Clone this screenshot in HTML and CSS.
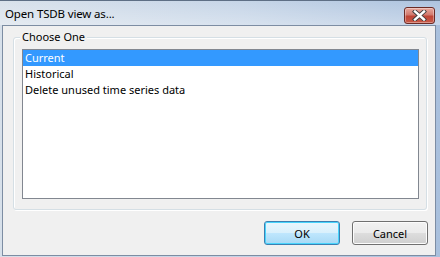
FILE: index.html
```html
<!DOCTYPE html>
<html>
<head>
<meta charset="utf-8">
<link rel="stylesheet" href="styles.css">
</head>
<body>
<div class="window">
  <div class="titlebar">
    <span class="title">Open TSDB view as...</span>
    <button class="close" aria-label="Close">
      <svg width="17" height="11" viewBox="0 0 17 11">
        <path d="M4 1.5 L13 9.5 M13 1.5 L4 9.5" stroke="#3d3d3d" stroke-width="4.2" stroke-linecap="square" fill="none"/>
        <path d="M4 1.5 L13 9.5 M13 1.5 L4 9.5" stroke="#ffffff" stroke-width="2.4" stroke-linecap="square" fill="none"/>
      </svg>
    </button>
  </div>
  <div class="client">
    <div class="group">
      <span class="group-label">Choose One</span>
      <ul class="list">
        <li class="item selected">Current</li>
        <li class="item">Historical</li>
        <li class="item">Delete unused time series data</li>
      </ul>
    </div>
    <div class="buttons">
      <button class="btn default">OK</button>
      <button class="btn">Cancel</button>
    </div>
  </div>
</div>
</body>
</html>
```
FILE: styles.css
```css
html, body {
  margin: 0;
  padding: 0;
  background: #fff;
}
body {
  font-family: "Noto Sans", "Open Sans", sans-serif;
  font-size: 11px;
  color: #000;
}
.window {
  width: 440px;
  height: 257px;
  box-sizing: border-box;
  padding: 0 4px 1px 2px;
  border-top: 1px solid #5e6f85;
  background: linear-gradient(90deg, #d7e0ea 0%, #c3d3e6 55%, #a9c0dd 100%);
  display: flex;
  flex-direction: column;
}
.titlebar {
  height: 24px;
  display: flex;
  align-items: center;
  justify-content: space-between;
  padding-left: 5px;
  background: linear-gradient(180deg, rgba(255,255,255,0.05), rgba(255,255,255,0.35));
  margin: 0 -4px 0 -2px;
  padding-right: 5px;
}
.title {
  color: #000;
  font-size: 11.5px;
  line-height: 16px;
  margin-top: 2px;
  letter-spacing: -0.15px;
}
.close {
  width: 31px;
  height: 17px;
  margin-top: 4px;
  padding: 0;
  border: 1px solid #6b2b25;
  border-radius: 3px;
  background: linear-gradient(180deg, #e8a89d 0%, #d27a6e 45%, #bf4536 55%, #c85a48 100%);
  box-shadow: inset 0 0 0 1px rgba(255,255,255,0.35);
  display: flex;
  align-items: center;
  justify-content: center;
}
.close svg { display: block; }
.client {
  flex: 1;
  background: #f0f0f0;
  border: 1px solid #7d8da3;
  display: flex;
  flex-direction: column;
}
.group {
  position: relative;
  margin: 11px 8px 0 10px;
  height: 173px;
  box-sizing: border-box;
  border: 1px solid #d5dfe5;
  border-radius: 3px;
  box-shadow: inset 1px 1px 0 #ffffff, 1px 1px 0 #ffffff;
  padding: 11px 7px 10px 8px;
}
.group-label {
  position: absolute;
  left: 6px;
  top: -9px;
  padding: 0 2px;
  background: #f0f0f0;
  line-height: 16px;
}
.list {
  list-style: none;
  margin: 0;
  padding: 0;
  height: 150px;
  box-sizing: border-box;
  border: 1px solid #828790;
  background: #fff;
}
.item {
  height: 16px;
  line-height: 16px;
  padding-left: 2px;
  white-space: nowrap;
}
.item.selected {
  background: #3399ff;
  color: #fff;
}
.buttons {
  display: flex;
  justify-content: flex-end;
  gap: 12px;
  margin: 11px 7px 0 0;
}
.btn {
  width: 76px;
  height: 24px;
  padding: 0;
  font-family: "Noto Sans", "Open Sans", sans-serif;
  font-size: 11px;
  color: #000;
  border: 1px solid #707070;
  border-radius: 3px;
  background: linear-gradient(180deg, #f2f2f2 0%, #ebebeb 48%, #dddddd 52%, #cfcfcf 100%);
  box-shadow: inset 0 0 0 1px #fcfcfc;
}
.btn.default {
  border-color: #3c7fb1;
  background: linear-gradient(180deg, #eaf6fd 0%, #d9f0fc 48%, #bee6fd 52%, #a7d9f5 100%);
  box-shadow: inset 0 0 0 1px #48d4fc;
}
```
